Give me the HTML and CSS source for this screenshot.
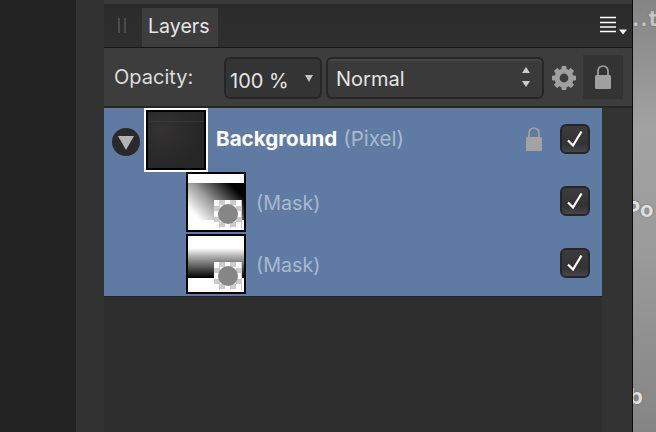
FILE: index.html
```html
<!DOCTYPE html>
<html lang="en">
<head>
<meta charset="utf-8">
<title>Layers</title>
<link rel="stylesheet" href="styles.css">
</head>
<body>
<div class="app">
  <div class="side-dark"></div>
  <div class="side-mid"></div>
  <section class="panel">
    <header class="tabbar">
      <div class="grip"><i></i><i></i></div>
      <div class="tab">Layers</div>
      <svg class="menu" width="28" height="20" viewBox="0 0 28 20">
        <path d="M0 1.5H16M0 6.5H16M0 11H16M0 15.5H16" stroke="#fff" stroke-width="1.6"/>
        <path d="M19 13.5H27L23 18.5Z" fill="#eee"/>
      </svg>
    </header>
    <div class="toolbar">
      <span class="label">Opacity:</span>
      <div class="field field-opacity"><span class="opacity-value">100 %</span><span class="arrow"></span></div>
      <div class="field field-blend"><span class="blend-value">Normal</span>
        <svg class="updown" width="8" height="20" viewBox="0 0 8 20"><path d="M4 0L8 6H0ZM4 20L0 14H8Z" fill="#ccc"/></svg>
      </div>
      <svg class="gear" width="26" height="26" viewBox="0 0 26 26">
        <g fill="#a0a0a0">
          <circle cx="13" cy="13" r="9.5"/>
          <rect x="10.5" y="1" width="5" height="24" rx="1"/>
          <rect x="10.5" y="1" width="5" height="24" rx="1" transform="rotate(45 13 13)"/>
          <rect x="10.5" y="1" width="5" height="24" rx="1" transform="rotate(90 13 13)"/>
          <rect x="10.5" y="1" width="5" height="24" rx="1" transform="rotate(135 13 13)"/>
        </g>
        <circle cx="13" cy="13" r="4.4" fill="#3d3d3d"/>
      </svg>
      <div class="lockbox">
        <svg width="16" height="24" viewBox="0 0 16 24"><path d="M3 11V6a5 5 0 0 1 10 0v5" fill="none" stroke="#a0a0a0" stroke-width="1.7"/><rect y="10" width="16" height="14" rx="1.5" fill="#a0a0a0"/></svg>
      </div>
    </div>
    <div class="list">
      <div class="layers">
        <div class="row row-main">
          <span class="disclosure"><svg width="16" height="14" viewBox="0 0 16 14"><path d="M0 0H16L8 14Z" fill="#b4b4b4"/></svg></span>
          <div class="thumb"><div class="thumb-inner"></div></div>
          <span class="name"><b>Background</b> <span class="kind">(Pixel)</span></span>
          <svg class="row-lock" width="16" height="24" viewBox="0 0 16 24"><path d="M3 11V6a5 5 0 0 1 10 0v5" fill="none" stroke="#a3a3a3" stroke-width="1.7"/><rect y="10" width="16" height="14" rx="1.5" fill="#a3a3a3"/></svg>
          <span class="check"><svg width="20" height="20" viewBox="0 0 20 20"><path d="M3 11.5L8 16.5L16.5 2.5" fill="none" stroke="#fff" stroke-width="2.2"/></svg></span>
        </div>
        <div class="row row-mask">
          <div class="mask mask-a"><div class="chip"><span class="dot"></span></div></div>
          <span class="kind mask-label">(Mask)</span>
          <span class="check"><svg width="20" height="20" viewBox="0 0 20 20"><path d="M3 11.5L8 16.5L16.5 2.5" fill="none" stroke="#fff" stroke-width="2.2"/></svg></span>
        </div>
        <div class="row row-mask">
          <div class="mask mask-b"><div class="chip"><span class="dot"></span></div></div>
          <span class="kind mask-label">(Mask)</span>
          <span class="check"><svg width="20" height="20" viewBox="0 0 20 20"><path d="M3 11.5L8 16.5L16.5 2.5" fill="none" stroke="#fff" stroke-width="2.2"/></svg></span>
        </div>
      </div>
      <div class="list-rest"></div>
    </div>
  </section>
  <div class="divider"></div>
  <div class="canvas">
    <span class="cv cv1">..t</span>
    <span class="cv cv2">Po</span>
    <span class="cv cv3">b</span>
  </div>
</div>
</body>
</html>
```
FILE: styles.css
```css
* { box-sizing: border-box; }
html, body { margin: 0; height: 100%; overflow: hidden; }
body { font-family: "Inter", "Liberation Sans", sans-serif; background: #222; }
.app { display: flex; width: 656px; height: 432px; }
.side-dark { width: 76px; background: #232323; }
.side-mid { width: 28px; background: #323232; }
.panel { width: 528px; display: flex; flex-direction: column; background: #333; }

.tabbar {
  height: 48px; display: flex; align-items: stretch;
  background: linear-gradient(#2b2b2b, #2f2f2f);
  border-top: 4px solid #3a3a3a; border-bottom: 1px solid #151515;
  padding-top: 4px; position: relative;
}
.grip { width: 38px; display: flex; gap: 4px; padding: 10px 0 0 14px; }
.grip i { width: 2px; height: 15px; background: #4c4c4c; }
.tab {
  width: 76px; background: #3d3d3d; color: #e6e6e6; font-size: 19.6px;
  padding: 6px 0 0 6px;
}
.menu { position: absolute; left: 496px; top: 12px; }

.toolbar {
  background: #3d3d3d; display: flex; align-items: center;
  padding: 8px 0 0 10px; border-bottom: 2px solid #262626; height: 60px;
}
.label { color: #dcdcdc; font-size: 20px; width: 110px; margin-top: -8px; }
.field {
  height: 42px; margin-top: -6px; border: 2px solid #262626; border-radius: 6px; background: #3a3a3a;
  color: #e4e4e4; font-size: 20px; display: flex; align-items: center; position: relative;
  box-shadow: inset 0 2px 0 #464646;
}
.field-opacity { width: 98px; padding: 6px 0 0 4px; background: #343434; box-shadow: none; }
.arrow {
  position: absolute; right: 7px; top: 16px; width: 0; height: 0;
  border-left: 4.5px solid transparent; border-right: 4.5px solid transparent; border-top: 7px solid #c4c4c4;
}
.field-blend { width: 218px; margin-left: 4px; padding: 2px 0 0 8px; }
.updown { position: absolute; right: 12px; top: 8px; }
.gear { margin: -6px 0 0 7px; }
.lockbox {
  width: 40px; height: 44px; margin: -8px 0 0 6px; background: #333;
  display: flex; align-items: center; justify-content: center;
}

.list { flex: 1; display: flex; flex-direction: column; width: 528px; background: #333; }
.layers { width: 498px; height: 189px; background: #5f7ba3; border-bottom: 1px solid #222; }
.list-rest { flex: 1; width: 498px; background: #2d2d2d; }
.row { display: flex; align-items: center; position: relative; }
.row-main { height: 64px; padding-left: 8px; }
.disclosure {
  width: 28px; height: 28px; border-radius: 50%; background: #2a2a2a;
  display: flex; align-items: center; justify-content: center; padding-top: 2px; margin-top: 3px;
}
.thumb { width: 64px; height: 64px; margin-left: 4px; border: 2px solid #fff; background: #000; padding: 2px; }
.thumb-inner {
  width: 100%; height: 100%;
  background:
    linear-gradient(#353a30, #353a30) 0 9px / 100% 1px no-repeat,
    radial-gradient(circle at 25% 30%, #353234, #2a2a2a 45%, #272727 70%);
}
.name { margin-left: 8px; font-size: 20.6px; color: #fff; white-space: nowrap; margin-top: -3px; }
.name b { font-weight: 700; }
.kind { color: #a9b9d0; font-weight: 400; }
.row-lock { position: absolute; left: 422px; top: 19px; }
.check {
  position: absolute; left: 456px; width: 30px; height: 30px; border-radius: 6px;
  border: 2px solid #262626; background: linear-gradient(#3c3c3c, #333 70%, #474747);
  display: flex; align-items: center; justify-content: center;
}
.row-main .check { top: 16px; }
.row-mask { height: 60px; padding-left: 82px; margin-bottom: 2px; }
.row-mask .check { top: 14px; }
.mask { width: 60px; height: 60px; border: 2px solid #000; background: #fff; position: relative; flex: none; }
.mask-a::before {
  content: ""; position: absolute; left: 0; right: 0; top: 9px; height: 37px;
  background: linear-gradient(45deg, #fff 12%, #999 45%, #000 85%);
}
.mask-b::before {
  content: ""; position: absolute; left: 0; right: 0; top: 12px; height: 30px;
  background: linear-gradient(#fff, #aaa 30%, #000);
}
.chip {
  position: absolute; left: 26px; top: 26px; width: 28px; height: 28px;
  background: repeating-conic-gradient(#ccc 0 25%, #fff 0 50%) 0 0 / 11px 11px;
  display: flex; align-items: center; justify-content: center;
}
.dot { width: 20px; height: 20px; border-radius: 50%; background: #868686; }
.mask-label { margin-left: 10px; font-size: 19.7px; padding-top: 2px; }

.divider { width: 1px; background: #0c0c0c; }
.canvas { flex: 1; position: relative; overflow: hidden; background: linear-gradient(#858585, #a2a2a2 30%, #9a9a9a 60%, #858585); }
.cv { position: absolute; color: #dedede; font-size: 22px; font-weight: 700; text-shadow: 0 0 2px #666; }
.cv1 { top: 5px; left: -1px; color: #c4c4c4; letter-spacing: 1px; }
.cv2 { top: 196px; left: -7px; }
.cv3 { top: 383px; left: -4px; }
```
